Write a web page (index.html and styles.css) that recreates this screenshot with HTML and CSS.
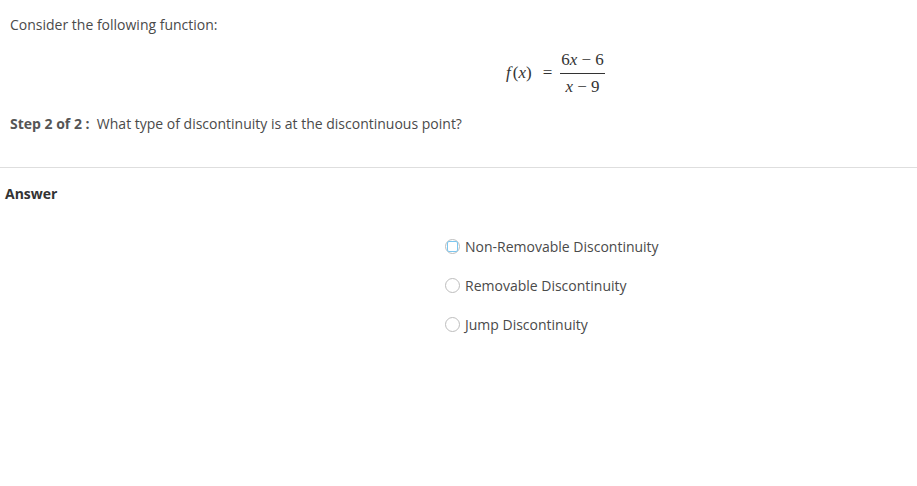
FILE: index.html
```html
<!DOCTYPE html>
<html>
<head>
<meta charset="utf-8">
<link rel="stylesheet" href="styles.css">
</head>
<body>
<div class="question">
  <p class="intro">Consider the following function:</p>
  <div class="math-row">
    <span class="math">
      <span class="fx"><i class="f">f</i>(<i>x</i>)</span>
      <span class="eq">=</span>
      <span class="frac">
        <span class="num">6<i>x</i> − 6</span>
        <span class="den"><i>x</i> − 9</span>
      </span>
    </span>
  </div>
  <p class="step"><b>Step 2 of 2 :</b>&nbsp; What type of discontinuity is at the discontinuous point?</p>
</div>
<div class="answer">
  <h3 class="answer-title">Answer</h3>
  <ul class="options">
    <li class="option"><span class="radio focused"></span>Non-Removable Discontinuity</li>
    <li class="option"><span class="radio"></span>Removable Discontinuity</li>
    <li class="option"><span class="radio"></span>Jump Discontinuity</li>
  </ul>
</div>
</body>
</html>
```
FILE: styles.css
```css
html, body {
  margin: 0;
  padding: 0;
  background: #fff;
}
body {
  font-family: "Open Sans", "Liberation Sans", sans-serif;
  font-size: 14px;
  color: #4a4a4a;
  width: 917px;
  height: 486px;
  overflow: hidden;
}
.question {
  padding: 15px 10px 0 10px;
  border-bottom: 1px solid #dedede;
  height: 152px;
}
.intro {
  margin: 0;
  line-height: 19px;
}
.math-row {
  display: flex;
  padding-left: 496px;
  margin-top: 16px;
}
.math {
  display: inline-flex;
  align-items: center;
  font-family: "Liberation Serif", "Times New Roman", serif;
  font-size: 17px;
  color: #333;
}
.math i {
  font-style: italic;
  font-family: "Liberation Serif", "Times New Roman", serif;
}
.math i.f {
  margin-right: 2px;
}
.fx {
  margin-right: 11px;
}
.eq {
  margin-right: 8px;
}
.frac {
  display: inline-flex;
  flex-direction: column;
  align-items: center;
}
.num {
  padding: 0 1px 4px;
  border-bottom: 1px solid #333;
  line-height: 19px;
}
.den {
  padding-top: 3px;
  line-height: 19px;
}
.step {
  margin: 18px 0 0 0;
  line-height: 19px;
}
.step b {
  color: #555;
}
.answer {
  padding: 16px 5px 0 5px;
}
.answer-title {
  margin: 0;
  font-size: 14px;
  font-weight: 700;
  color: #333;
  line-height: 19px;
}
.options {
  list-style: none;
  margin: 34px 0 0 440px;
  padding: 0;
  display: flex;
  flex-direction: column;
  gap: 20px;
}
.option {
  display: flex;
  align-items: center;
  line-height: 19px;
  color: #4a4a4a;
}
.radio {
  width: 13px;
  height: 13px;
  border: 1px solid #bdbdbd;
  border-radius: 50%;
  margin-right: 5px;
  position: relative;
  box-sizing: content-box;
}
.radio.focused::after {
  content: "";
  position: absolute;
  left: 1px;
  top: 1px;
  width: 9px;
  height: 9px;
  border: 1.5px solid #7cc6ee;
  border-radius: 2px;
}
```
